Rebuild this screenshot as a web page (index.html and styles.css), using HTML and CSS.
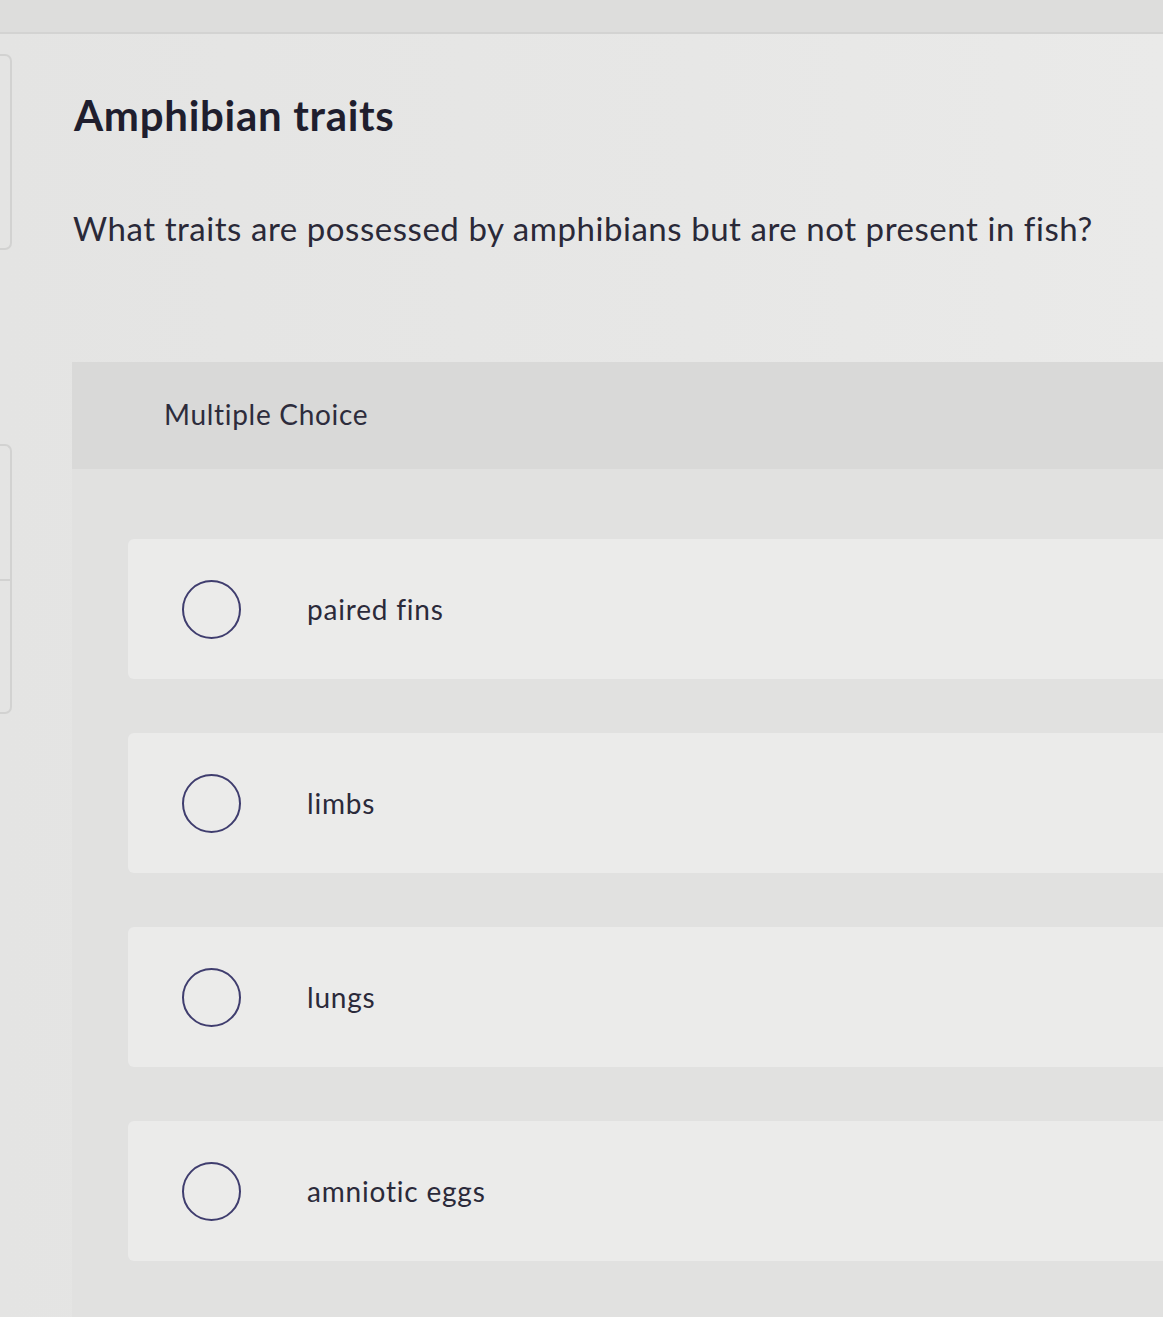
FILE: index.html
```html
<!DOCTYPE html>
<html lang="en">

<head>
    <meta charset="UTF-8">
    <meta name="viewport" content="width=device-width, initial-scale=1.0">
    <title>Amphibian traits</title>

    <!-- styles -->
    <link rel="stylesheet" href="styles.css">
</head>

<body>
    <!-- top strip -->
    <div class="topbar"></div>

    <div class="layout">
        <!-- left panel edges -->
        <div class="side">
            <div class="stub stub1"></div>
            <div class="stub stub2"></div>
            <div class="stub stub3"></div>
        </div>

        <!-- question -->
        <div class="main">
            <h1 class="title">Amphibian traits</h1>
            <p class="question">What traits are possessed by amphibians but are not present in fish?</p>

            <div class="mc">
                <div class="mc-head">Multiple Choice</div>
                <div class="mc-body">
                    <label class="choice">
                        <span class="radio"></span>
                        <span class="choice-text">paired fins</span>
                    </label>
                    <label class="choice">
                        <span class="radio"></span>
                        <span class="choice-text">limbs</span>
                    </label>
                    <label class="choice">
                        <span class="radio"></span>
                        <span class="choice-text">lungs</span>
                    </label>
                    <label class="choice">
                        <span class="radio"></span>
                        <span class="choice-text">amniotic eggs</span>
                    </label>
                </div>
            </div>
        </div>
    </div>
</body>

</html>
```

FILE: styles.css
```css
/* reset */
* {
    margin: 0;
    padding: 0;
    box-sizing: border-box;
}

body {
    background: linear-gradient(90deg, #e4e4e3 0%, #e7e7e6 60%, #eaeae9 100%);
    font-family: Lato, "Open Sans", sans-serif;
    font-variant-ligatures: none;
    color: #2b2a3a;
    overflow: hidden;
}

/* top strip */
.topbar {
    height: 34px;
    background-color: #dddddc;
    border-bottom: 2px solid #d3d3d2;
}

.layout {
    display: flex;
}

/* left panel edges */
.side {
    width: 12px;
    padding-top: 20px;
    flex-shrink: 0;
}

.stub {
    border: 2px solid #d2d2d1;
    border-left: none;
    border-radius: 0 7px 7px 0;
}

.stub1 {
    height: 196px;
}

.stub2 {
    height: 135px;
    margin-top: 194px;
    border-bottom: none;
    border-radius: 0 7px 0 0;
}

.stub3 {
    height: 135px;
    border-radius: 0 0 7px 0;
}

/* question area */
.main {
    flex: 1;
    margin-left: 60px;
}

.title {
    margin-top: 57px;
    margin-left: 2px;
    font-size: 42px;
    font-weight: 700;
    line-height: 48px;
    letter-spacing: 0.7px;
    color: #1f1e2e;
}

.question {
    margin-top: 67px;
    margin-left: 1px;
    font-size: 33px;
    line-height: 44px;
    letter-spacing: 0.55px;
    color: #2a2938;
}

/* multiple choice block */
.mc {
    margin-top: 112px;
    background-color: #e1e1e0;
    min-height: 960px;
}

.mc-head {
    height: 107px;
    padding: 34px 0 0 92px;
    background-color: #d9d9d8;
    font-size: 28px;
    line-height: 36px;
    letter-spacing: 0.7px;
    color: #2d2c3c;
}

.mc-body {
    display: flex;
    flex-direction: column;
    gap: 54px;
    padding: 70px 0 0 56px;
}

.choice {
    display: flex;
    align-items: center;
    height: 140px;
    padding-left: 54px;
    background-color: #ebebea;
    border-radius: 6px 0 0 6px;
}

.radio {
    width: 59px;
    height: 59px;
    border: 2px solid #3f3d6e;
    border-radius: 50%;
    flex-shrink: 0;
}

.choice-text {
    margin-left: 66px;
    font-size: 28px;
    letter-spacing: 0.8px;
    color: #2b2a3a;
}
```
